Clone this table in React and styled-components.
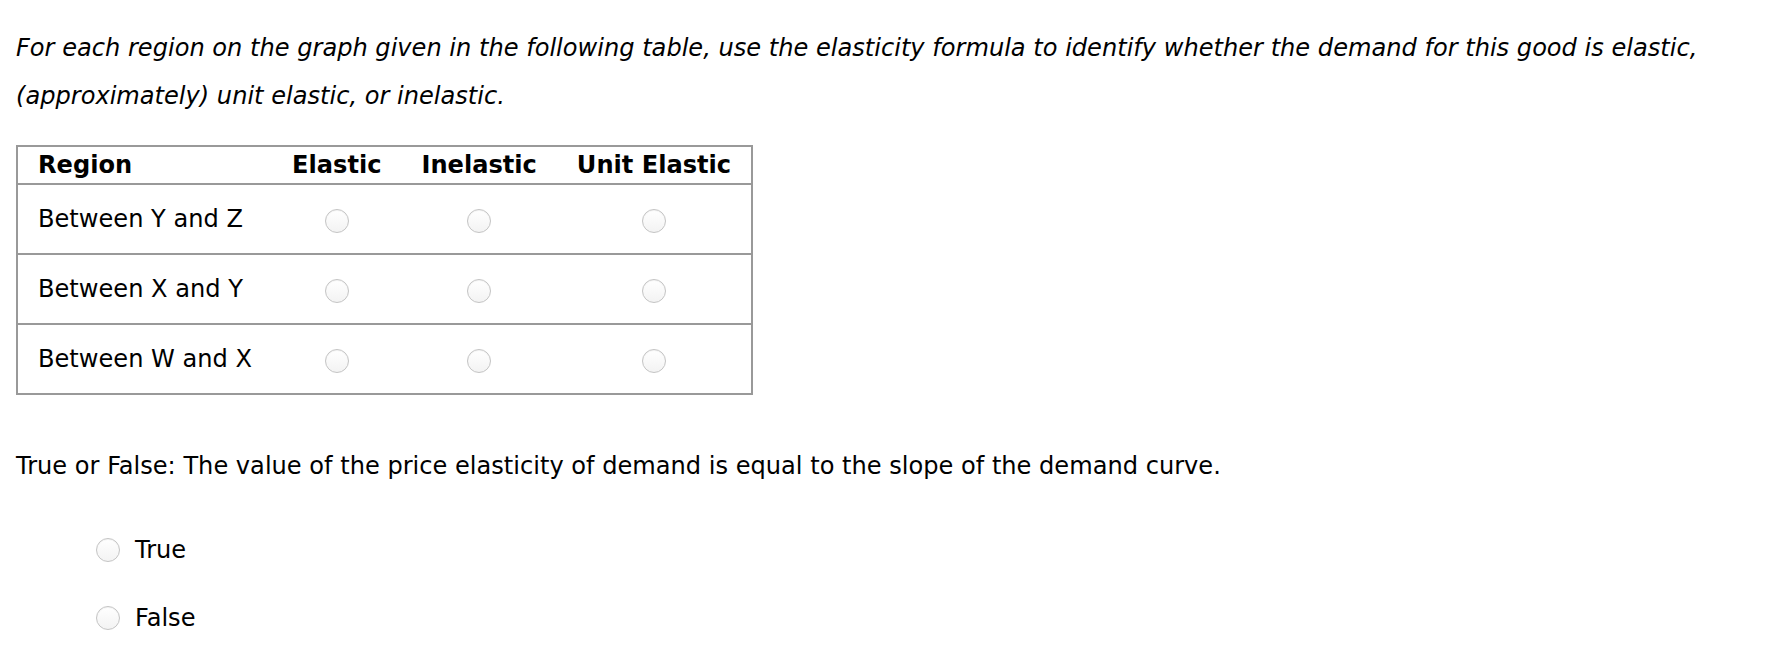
import React from "react";
import styled, { createGlobalStyle } from "styled-components";

const GlobalStyle = createGlobalStyle`
  body {
    margin: 0;
    background: #fff;
    color: #000;
    font-family: "DejaVu Sans", Verdana, sans-serif;
  }
`;

const Page = styled.div`
  padding: 24px 16px;
  font-size: 24.1px;
  line-height: 48px;
`;

const Intro = styled.p`
  margin: 0;
  font-style: italic;
`;

const Table = styled.table`
  margin-top: 25px;
  border-collapse: collapse;
  border: 2px solid #999;
`;

const HeadCell = styled.th`
  height: 36px;
  padding: 0 20px;
  font-weight: bold;
  text-align: ${(p) => (p.$left ? "left" : "center")};
  line-height: 36px;
  border-bottom: 2px solid #999;
  white-space: nowrap;
`;

const Row = styled.tr`
  border-bottom: 2px solid #999;
`;

const Cell = styled.td`
  height: 68px;
  padding: 0 20px;
  text-align: ${(p) => (p.$left ? "left" : "center")};
  vertical-align: middle;
  white-space: nowrap;
`;

const Radio = styled.span`
  display: inline-block;
  width: 22px;
  height: 22px;
  border-radius: 50%;
  border: 1px solid #c4c4c4;
  background: linear-gradient(#fff, #f3f3f3);
  box-shadow: inset 0 1px 1px rgba(0, 0, 0, 0.05);
  vertical-align: middle;
  transform: translateY(${(p) => p.$shift || 0}px);
`;

const Question = styled.p`
  margin: 47px 0 0;
`;

const Options = styled.div`
  margin-top: 36px;
  padding-left: 80px;
  display: flex;
  flex-direction: column;
  gap: 20px;
`;

const Option = styled.label`
  display: flex;
  align-items: center;
  gap: 15px;
  height: 48px;
`;

const rows = ["Between Y and Z", "Between X and Y", "Between W and X"];

export default function App() {
  return (
    <Page>
      <GlobalStyle />
      <Intro>
        For each region on the graph given in the following table, use the elasticity formula to identify whether the demand for this good is elastic,
        <br />
        (approximately) unit elastic, or inelastic.
      </Intro>
      <Table>
        <thead>
          <tr>
            <HeadCell $left>Region</HeadCell>
            <HeadCell>Elastic</HeadCell>
            <HeadCell>Inelastic</HeadCell>
            <HeadCell>Unit Elastic</HeadCell>
          </tr>
        </thead>
        <tbody>
          {rows.map((r) => (
            <Row key={r}>
              <Cell $left>{r}</Cell>
              <Cell><Radio $shift={1} /></Cell>
              <Cell><Radio $shift={1} /></Cell>
              <Cell><Radio $shift={1} /></Cell>
            </Row>
          ))}
        </tbody>
      </Table>
      <Question>
        True or False: The value of the price elasticity of demand is equal to the slope of the demand curve.
      </Question>
      <Options>
        <Option><Radio />True</Option>
        <Option><Radio />False</Option>
      </Options>
    </Page>
  );
}
